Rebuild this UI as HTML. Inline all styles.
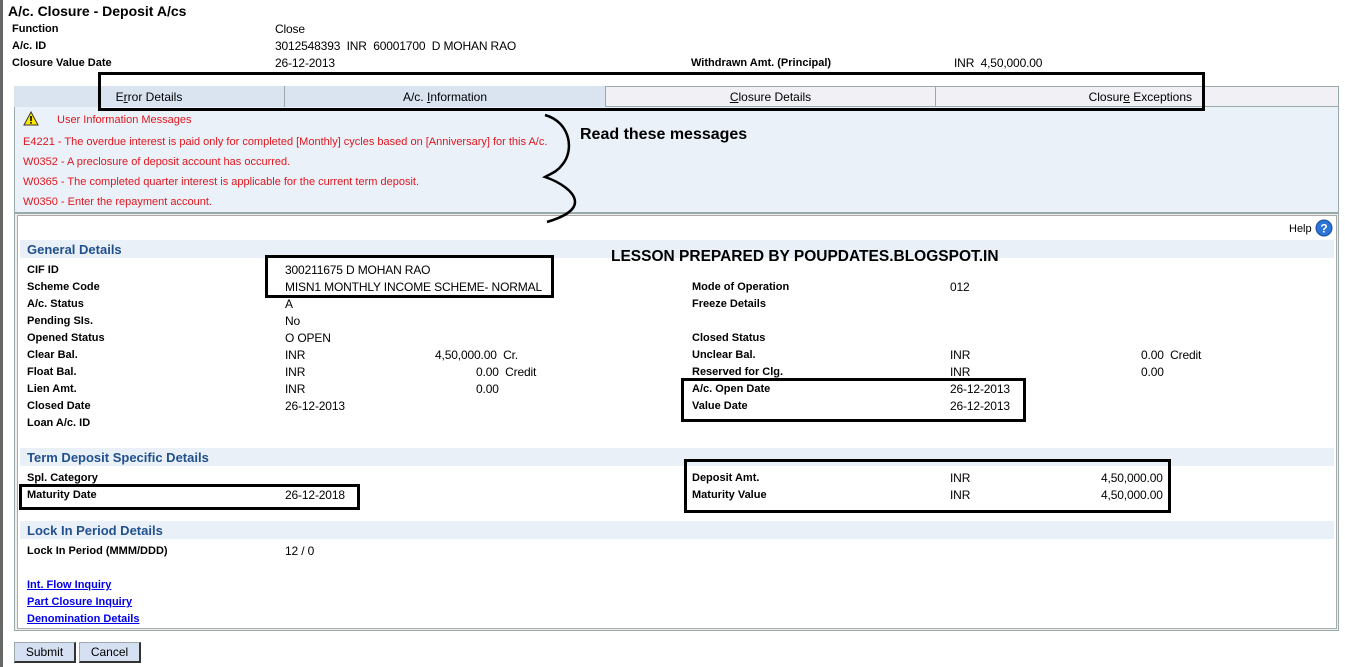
<!DOCTYPE html>
<html><head><meta charset="utf-8"><style>
*{margin:0;padding:0;box-sizing:border-box}
body{width:1345px;height:667px;background:#fff;position:relative;overflow:hidden;font-family:"Liberation Sans",Arial,sans-serif;font-size:11px;color:#000}
.a{position:absolute;white-space:nowrap;line-height:13px;margin-top:1px}
.b{font-weight:bold}
.r{color:#e0161e}
.h{position:absolute;left:20px;width:1314px;height:18px;background:#eaf0f8;color:#21508e;font-weight:bold;font-size:13px;padding-left:7px;line-height:19px}
.box{position:absolute;border:3px solid #000}
.lk{color:#0000ee;text-decoration:underline;font-weight:bold}
.tab{position:absolute;top:86px;height:21px;border-right:1px solid #9aa;text-align:center;line-height:22px;font-size:12px}
.btn{position:absolute;top:642px;height:21px;background:#d5e0f2;border:1px solid #9aa;border-right:2px solid #333;border-bottom:2px solid #333;text-align:center;font-size:12px;line-height:18px}
.v{font-size:12px;letter-spacing:-0.15px}
</style></head><body>
<div style="position:absolute;left:0;top:0;width:3px;height:667px;background:#666"></div>
<div class="a b" style="left:8px;top:2px;font-size:14px;line-height:16px">A/c. Closure - Deposit A/cs</div>
<div class="a b" style="left:12px;top:22px">Function</div><div class="a v" style="left:275px;top:22px">Close</div>
<div class="a b" style="left:12px;top:39px">A/c. ID</div><div class="a v" style="left:275px;top:39px">3012548393&nbsp; INR&nbsp; 60001700&nbsp; D MOHAN RAO</div>
<div class="a b" style="left:12px;top:56px">Closure Value Date</div><div class="a v" style="left:275px;top:56px">26-12-2013</div>
<div class="a b" style="left:691px;top:56px">Withdrawn Amt. (Principal)</div><div class="a v" style="left:954px;top:56px">INR&nbsp; 4,50,000.00</div>

<div style="position:absolute;left:14px;top:86px;width:1325px;height:21px;background:#f0f0f5;border:1px solid #9aa"></div>
<div class="tab" style="left:14px;width:271px;background:#dae3f0">E<u>r</u>ror Details</div>
<div class="tab" style="left:285px;width:321px;background:#dae3f0">A/c. <u>I</u>nformation</div>
<div class="tab" style="left:606px;width:330px"><u>C</u>losure Details</div>
<div class="tab" style="left:936px;width:264px;border:none;text-align:right;padding-right:8px">Closur<u>e</u> Exceptions</div>

<div style="position:absolute;left:14px;top:107px;width:1325px;height:106px;background:#eaf1f9;border:1px solid #9aa;border-top:none"></div>
<svg style="position:absolute;left:23px;top:111px" width="16" height="15"><polygon points="8,1 15,14 1,14" fill="#ffe800" stroke="#333" stroke-width="1"/><rect x="7.2" y="5" width="1.6" height="5" fill="#000"/><rect x="7.2" y="11" width="1.6" height="1.6" fill="#000"/></svg>
<div class="a r" style="left:57px;top:113px">User Information Messages</div>
<div class="a r" style="left:23px;top:135px">E4221 - The overdue interest is paid only for completed [Monthly] cycles based on [Anniversary] for this A/c.</div>
<div class="a r" style="left:23px;top:155px">W0352 - A preclosure of deposit account has occurred.</div>
<div class="a r" style="left:23px;top:175px">W0365 - The completed quarter interest is applicable for the current term deposit.</div>
<div class="a r" style="left:23px;top:195px">W0350 - Enter the repayment account.</div>

<div style="position:absolute;left:14px;top:213px;width:1325px;height:418px;border:1px solid #9aa;background:#eee"></div>
<div style="position:absolute;left:17px;top:215px;width:1320px;height:414px;border:1px solid #aaa;background:#fff"></div>
<div class="a" style="left:1289px;top:222px">Help</div>
<svg style="position:absolute;left:1315px;top:219px" width="18" height="18"><circle cx="9" cy="9" r="8" fill="#2b74d6" stroke="#1a4fa0"/><text x="9" y="13.5" font-size="12" font-weight="bold" fill="#fff" text-anchor="middle" font-family="Liberation Sans">?</text></svg>

<div class="h" style="top:240px">General Details</div>
<div class="a b" style="left:611px;top:247px;font-size:15.5px;line-height:17px">LESSON PREPARED BY POUPDATES.BLOGSPOT.IN</div>
<div class="a b" style="left:27px;top:263px">CIF ID</div><div class="a v" style="left:285px;top:263px">300211675 D MOHAN RAO</div>
<div class="a b" style="left:27px;top:280px">Scheme Code</div><div class="a v" style="left:285px;top:280px">MISN1 MONTHLY INCOME SCHEME- NORMAL</div>
<div class="a b" style="left:27px;top:297px">A/c. Status</div><div class="a v" style="left:285px;top:297px">A</div>
<div class="a b" style="left:27px;top:314px">Pending SIs.</div><div class="a v" style="left:285px;top:314px">No</div>
<div class="a b" style="left:27px;top:331px">Opened Status</div><div class="a v" style="left:285px;top:331px">O OPEN</div>
<div class="a b" style="left:27px;top:348px">Clear Bal.</div><div class="a v" style="left:285px;top:348px">INR</div><div class="a v" style="left:435px;top:348px">4,50,000.00&nbsp; Cr.</div>
<div class="a b" style="left:27px;top:365px">Float Bal.</div><div class="a v" style="left:285px;top:365px">INR</div><div class="a v" style="left:476px;top:365px">0.00&nbsp; Credit</div>
<div class="a b" style="left:27px;top:382px">Lien Amt.</div><div class="a v" style="left:285px;top:382px">INR</div><div class="a v" style="left:476px;top:382px">0.00</div>
<div class="a b" style="left:27px;top:399px">Closed Date</div><div class="a v" style="left:285px;top:399px">26-12-2013</div>
<div class="a b" style="left:27px;top:416px">Loan A/c. ID</div>

<div class="a b" style="left:692px;top:280px">Mode of Operation</div><div class="a v" style="left:950px;top:280px">012</div>
<div class="a b" style="left:692px;top:297px">Freeze Details</div>
<div class="a b" style="left:692px;top:331px">Closed Status</div>
<div class="a b" style="left:692px;top:348px">Unclear Bal.</div><div class="a v" style="left:950px;top:348px">INR</div><div class="a v" style="left:1141px;top:348px">0.00&nbsp; Credit</div>
<div class="a b" style="left:692px;top:365px">Reserved for Clg.</div><div class="a v" style="left:950px;top:365px">INR</div><div class="a v" style="left:1141px;top:365px">0.00</div>
<div class="a b" style="left:692px;top:382px">A/c. Open Date</div><div class="a v" style="left:950px;top:382px">26-12-2013</div>
<div class="a b" style="left:692px;top:399px">Value Date</div><div class="a v" style="left:950px;top:399px">26-12-2013</div>

<div class="h" style="top:448px">Term Deposit Specific Details</div>
<div class="a b" style="left:27px;top:471px">Spl. Category</div>
<div class="a b" style="left:27px;top:488px">Maturity Date</div><div class="a v" style="left:285px;top:488px">26-12-2018</div>
<div class="a b" style="left:692px;top:471px">Deposit Amt.</div><div class="a v" style="left:950px;top:471px">INR</div><div class="a v" style="left:1101px;top:471px">4,50,000.00</div>
<div class="a b" style="left:692px;top:488px">Maturity Value</div><div class="a v" style="left:950px;top:488px">INR</div><div class="a v" style="left:1101px;top:488px">4,50,000.00</div>

<div class="h" style="top:521px">Lock In Period Details</div>
<div class="a b" style="left:27px;top:544px">Lock In Period (MMM/DDD)</div><div class="a v" style="left:285px;top:544px">12 / 0</div>
<div class="a lk" style="left:27px;top:578px">Int. Flow Inquiry</div>
<div class="a lk" style="left:27px;top:595px">Part Closure Inquiry</div>
<div class="a lk" style="left:27px;top:612px">Denomination Details</div>

<div class="btn" style="left:14px;width:62px">Submit</div>
<div class="btn" style="left:79px;width:62px">Cancel</div>

<div class="box" style="left:98px;top:72px;width:1107px;height:39px"></div>
<div class="box" style="left:265px;top:255px;width:289px;height:43px"></div>
<div class="box" style="left:681px;top:378px;width:345px;height:44px"></div>
<div class="box" style="left:19px;top:484px;width:341px;height:26px"></div>
<div class="box" style="left:684px;top:459px;width:487px;height:54px"></div>

<svg style="position:absolute;left:540px;top:110px" width="45" height="115"><path d="M5,5 C30,12 35,40 22,55 C17,62 10,64 5,67 C20,72 35,82 35,92 C35,102 20,108 7,112" fill="none" stroke="#000" stroke-width="2.5"/></svg>
<div class="a b" style="left:580px;top:125px;font-size:16px;line-height:18px">Read these messages</div>
</body></html>
